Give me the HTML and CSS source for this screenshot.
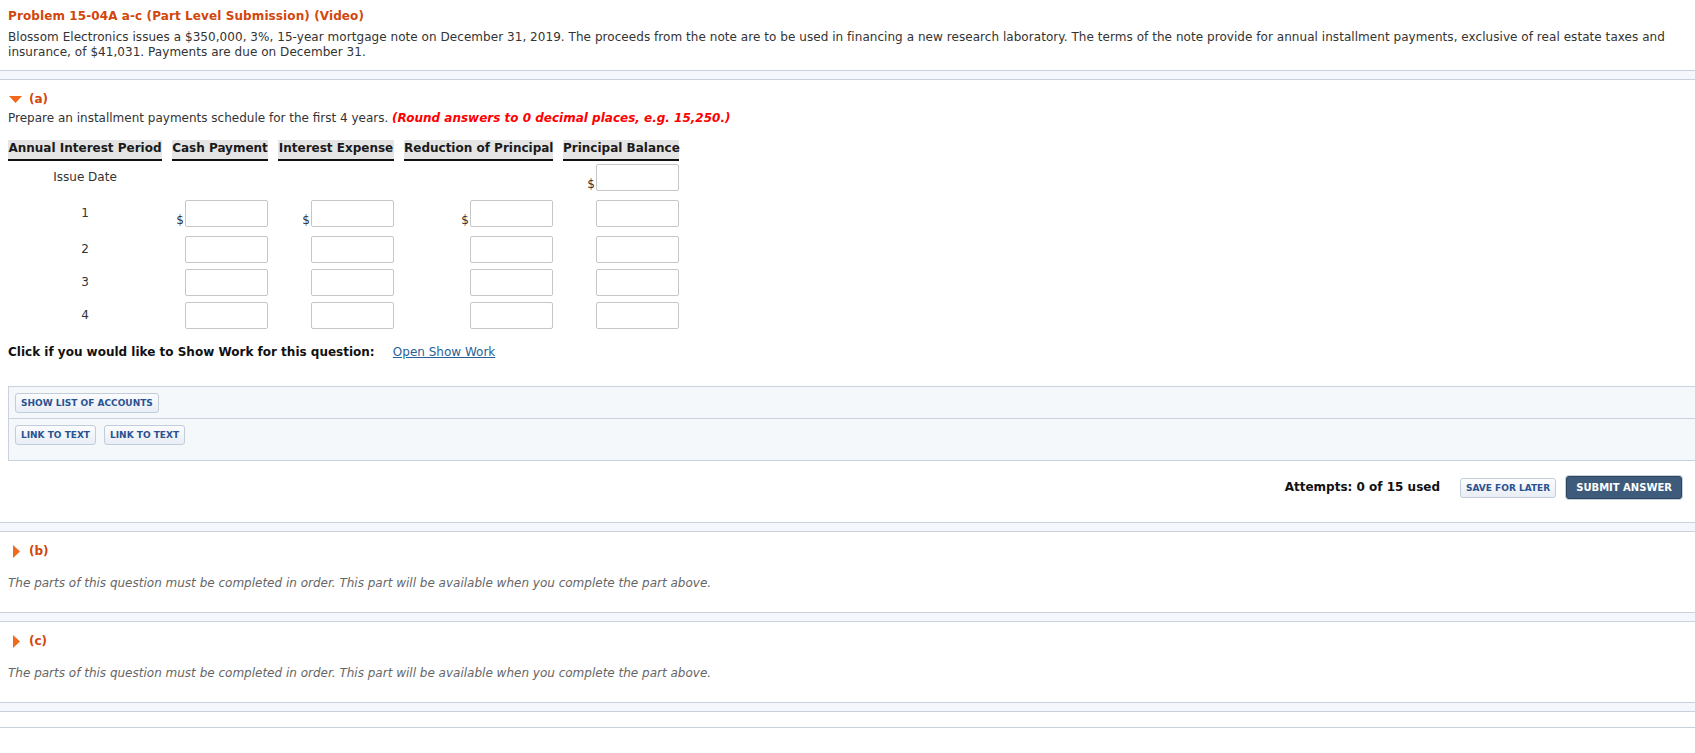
FILE: index.html
```html
<!DOCTYPE html>
<html lang="en">
<head>
<meta charset="utf-8">
<title>Problem 15-04A a-c</title>
<link rel="stylesheet" href="styles.css">
</head>
<body>
<div class="page">
  <header class="intro">
    <h1 class="title">Problem 15-04A a-c (Part Level Submission) (Video)</h1>
    <p class="desc">Blossom Electronics issues a $350,000, 3%, 15-year mortgage note on December 31, 2019. The proceeds from the note are to be used in financing a new research laboratory. The terms of the note provide for annual installment payments, exclusive of real estate taxes and insurance, of $41,031. Payments are due on December 31.</p>
  </header>
  <div class="sep"></div>

  <section class="part">
    <h2 class="part-head">
      <svg class="caret" width="15" height="15" viewBox="0 0 15 15"><polygon points="1,4 14,4 7.5,11" fill="#f0691c"/></svg>
      <span>(a)</span>
    </h2>
    <p class="instr">Prepare an installment payments schedule for the first 4 years. <em class="round">(Round answers to 0 decimal places, e.g. 15,250.)</em></p>

    <div class="schedule">
      <div class="th">Annual Interest Period</div>
      <div class="th">Cash Payment</div>
      <div class="th">Interest Expense</div>
      <div class="th">Reduction of Principal</div>
      <div class="th">Principal Balance</div>

      <div class="td lbl tall">Issue Date</div>
      <div class="td tall"></div>
      <div class="td tall"></div>
      <div class="td tall"></div>
      <div class="td tall"><span class="cur">$</span><input class="amt" type="text"></div>

      <div class="td lbl tall">1</div>
      <div class="td tall"><span class="cur">$</span><input class="amt" type="text"></div>
      <div class="td tall"><span class="cur">$</span><input class="amt" type="text"></div>
      <div class="td tall"><span class="cur">$</span><input class="amt" type="text"></div>
      <div class="td tall"><input class="amt" type="text"></div>

      <div class="td lbl">2</div>
      <div class="td"><input class="amt" type="text"></div>
      <div class="td"><input class="amt" type="text"></div>
      <div class="td"><input class="amt" type="text"></div>
      <div class="td"><input class="amt" type="text"></div>

      <div class="td lbl">3</div>
      <div class="td"><input class="amt" type="text"></div>
      <div class="td"><input class="amt" type="text"></div>
      <div class="td"><input class="amt" type="text"></div>
      <div class="td"><input class="amt" type="text"></div>

      <div class="td lbl">4</div>
      <div class="td"><input class="amt" type="text"></div>
      <div class="td"><input class="amt" type="text"></div>
      <div class="td"><input class="amt" type="text"></div>
      <div class="td"><input class="amt" type="text"></div>
    </div>

    <p class="showwork">Click if you would like to Show Work for this question: <a class="swlink" href="#">Open Show Work</a></p>

    <div class="tools">
      <div class="tool-row"><button class="btn">SHOW LIST OF ACCOUNTS</button></div>
      <div class="tool-row tool-row-last"><button class="btn">LINK TO TEXT</button><button class="btn">LINK TO TEXT</button></div>
    </div>

    <div class="actions">
      <span class="attempts">Attempts: 0 of 15 used</span>
      <button class="btn">SAVE FOR LATER</button>
      <button class="btn submit">SUBMIT ANSWER</button>
    </div>
  </section>
  <div class="sep"></div>

  <section class="part part-closed">
    <h2 class="part-head">
      <svg class="caret" width="15" height="15" viewBox="0 0 15 15"><polygon points="5,1 12,7.5 5,14" fill="#f0691c"/></svg>
      <span>(b)</span>
    </h2>
    <p class="locked">The parts of this question must be completed in order. This part will be available when you complete the part above.</p>
  </section>
  <div class="sep"></div>

  <section class="part part-closed">
    <h2 class="part-head">
      <svg class="caret" width="15" height="15" viewBox="0 0 15 15"><polygon points="5,1 12,7.5 5,14" fill="#f0691c"/></svg>
      <span>(c)</span>
    </h2>
    <p class="locked">The parts of this question must be completed in order. This part will be available when you complete the part above.</p>
  </section>
  <div class="sep"></div>
  <div class="tail"></div>
</div>
</body>
</html>
```

FILE: styles.css
```css
html, body {
  margin: 0;
  padding: 0;
  background: #ffffff;
}

body {
  font-family: "DejaVu Sans", Verdana, sans-serif;
  font-size: 12px;
  line-height: 15px;
  color: #333333;
}

.page {
  width: 100%;
}

.intro {
  padding: 9px 13px 10px 8px;
}

.title {
  margin: 0;
  font-size: 12px;
  line-height: 15px;
  font-weight: bold;
  color: #d2470c;
  letter-spacing: 0.1px;
}

.desc {
  margin: 6px 0 0 0;
  color: #333333;
  letter-spacing: 0.05px;
}

.sep {
  height: 8px;
  border-top: 1px solid #c9d1dc;
  border-bottom: 1px solid #c9d1dc;
  background: #f4f7fb;
}

.part {
  padding: 12px 13px 23px 8px;
}

.part-closed {
  padding-bottom: 21px;
}

.part-head {
  margin: 0;
  display: flex;
  align-items: center;
  gap: 6px;
  font-size: 12px;
  line-height: 15px;
  font-weight: bold;
  color: #d2470c;
}

.caret {
  display: block;
  flex: none;
}

.instr {
  margin: 4px 0 0 0;
}

.round {
  color: #ff0000;
  font-weight: bold;
  font-style: italic;
}

.schedule {
  margin-top: 14px;
  display: grid;
  grid-template-columns: 154px 96px 116px 149px 116px;
  column-gap: 10px;
  justify-content: start;
}

.th {
  background: #e5e5e5;
  border-bottom: 2px solid #111111;
  height: 19px;
  line-height: 17px;
  font-weight: bold;
  color: #1a1a1a;
  white-space: nowrap;
  text-align: center;
}

.td {
  display: flex;
  justify-content: flex-end;
  align-items: flex-end;
  padding: 3px 0 3px 0;
  align-self: start;
}

.td.tall {
  padding-bottom: 6px;
}

.td.lbl {
  display: block;
  text-align: center;
  line-height: 27px;
  height: 27px;
  color: #333333;
}

.cur {
  font-size: 12px;
  line-height: 12px;
  margin-right: 1px;
  padding-bottom: 1px;
  color: #333333;
}

.amt {
  box-sizing: border-box;
  width: 83px;
  height: 27px;
  margin: 0;
  padding: 0 4px;
  border: 1px solid #c6c6c6;
  border-radius: 2px;
  background: #ffffff;
  font-family: "DejaVu Sans", Verdana, sans-serif;
  font-size: 12px;
}

.showwork {
  margin: 13px 0 0 0;
  font-weight: bold;
  color: #111111;
}

.swlink {
  margin-left: 14px;
  font-weight: normal;
  color: #2b5f98;
  text-decoration: underline;
}

.tools {
  margin-top: 26px;
  margin-right: -13px;
  border: 1px solid #c9d2de;
  border-right: none;
  background: #f5f8fb;
}

.tool-row {
  display: flex;
  gap: 8px;
  padding: 6px 6px 5px 6px;
}

.tool-row-last {
  border-top: 1px solid #c9d2de;
  padding-bottom: 15px;
}

.btn {
  box-sizing: border-box;
  height: 20px;
  margin: 0;
  padding: 0 5px;
  border: 1px solid #c3ccd9;
  border-radius: 3px;
  background: linear-gradient(#fbfcfe, #e9eef5);
  color: #2a5291;
  font-family: "DejaVu Sans", Verdana, sans-serif;
  font-size: 9px;
  font-weight: bold;
  line-height: 18px;
  white-space: nowrap;
  cursor: pointer;
}

.actions {
  margin-top: 15px;
  display: flex;
  justify-content: flex-end;
  align-items: center;
  height: 23px;
  gap: 10px;
}

.attempts {
  font-weight: bold;
  color: #111111;
  margin-right: 10px;
}

.submit {
  height: 23px;
  padding: 0 9px;
  border: 1px solid #2d465f;
  background: #3e5b7b;
  color: #ffffff;
  font-size: 10px;
  line-height: 21px;
  box-shadow: 0 0 0 1px #c5d0dc;
}

.locked {
  margin: 17px 0 0 0;
  font-size: 12px;
  font-style: italic;
  color: #666666;
}

.tail {
  height: 15px;
  border-bottom: 1px solid #c9d1dc;
}
```
